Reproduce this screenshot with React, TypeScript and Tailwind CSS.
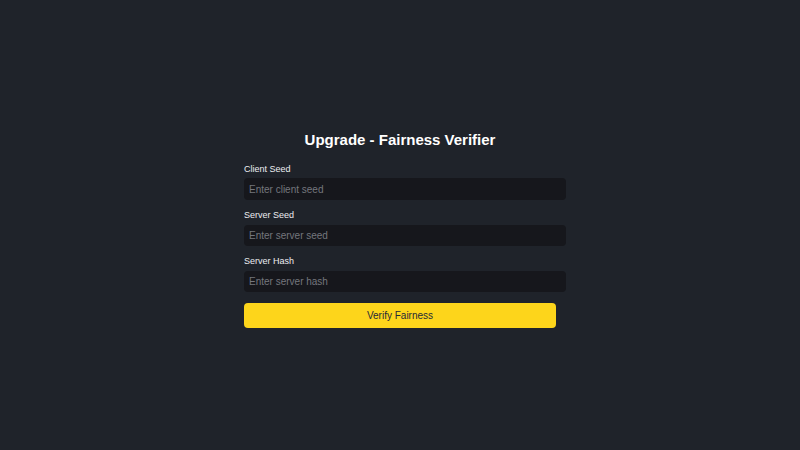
import React, { useState } from 'react';

export default function App() {
  const [clientSeed, setClientSeed] = useState('');
  const [serverSeed, setServerSeed] = useState('');
  const [serverHash, setServerHash] = useState('');

  const font = { fontFamily: '"Liberation Sans", Arial, sans-serif' };

  return (
    <div className="w-full h-[450px] bg-[#1f232a] flex justify-center pt-[130px]" style={font}>
      <div className="w-[312px] flex flex-col">
        <h2 className="text-[15px] leading-[20px] font-bold text-white text-center">
          Upgrade - Fairness Verifier
        </h2>

        <label className="mt-[13px] block text-[9px] leading-[12px] text-[#eceef1]">Client Seed</label>
        <input
          type="text"
          value={clientSeed}
          onChange={(e) => setClientSeed(e.target.value)}
          placeholder="Enter client seed"
          className="mt-[3px] h-[22px] w-full box-content rounded-[4px] bg-[#16171c] px-[5px] text-[10px] text-white placeholder:text-[#74767d] outline-none"
        />

        <label className="mt-[9px] block text-[9px] leading-[12px] text-[#eceef1]">Server Seed</label>
        <input
          type="text"
          value={serverSeed}
          onChange={(e) => setServerSeed(e.target.value)}
          placeholder="Enter server seed"
          className="mt-[4px] h-[21px] w-full box-content rounded-[4px] bg-[#16171c] px-[5px] text-[10px] text-white placeholder:text-[#74767d] outline-none"
        />

        <label className="mt-[9px] block text-[9px] leading-[12px] text-[#eceef1]">Server Hash</label>
        <input
          type="text"
          value={serverHash}
          onChange={(e) => setServerHash(e.target.value)}
          placeholder="Enter server hash"
          className="mt-[4px] h-[21px] w-full box-content rounded-[4px] bg-[#16171c] px-[5px] text-[10px] text-white placeholder:text-[#74767d] outline-none"
        />

        <button
          type="button"
          className="mt-[11px] h-[25px] w-full rounded-[4px] bg-[#fdd51b] text-[10px] text-[#1f2937]"
        >
          Verify Fairness
        </button>
      </div>
    </div>
  );
}
